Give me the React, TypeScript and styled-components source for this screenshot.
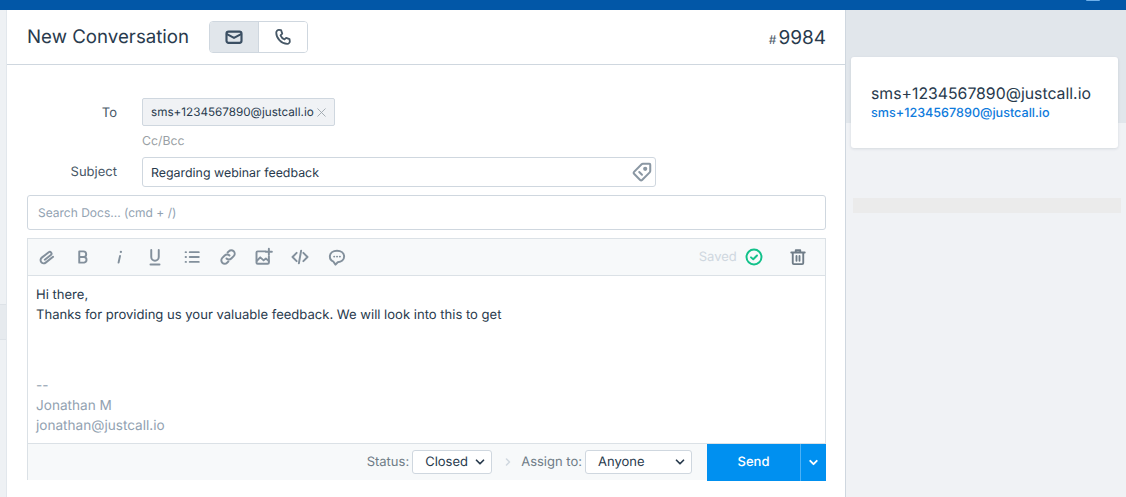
import React from "react";
import styled, { createGlobalStyle } from "styled-components";
import { ChevronDown, ChevronRight, X } from "lucide-react";

const GlobalStyle = createGlobalStyle`
  html, body {
    margin: 0;
    padding: 0;
    height: 100%;
    overflow: hidden;
    font-family: Inter, "Liberation Sans", sans-serif;
    color: #283a4d;
    text-rendering: geometricPrecision;
  }
  * { box-sizing: border-box; }
`;

const Page = styled.div`
  width: 1126px;
  height: 497px;
  display: flex;
  flex-direction: column;
  background: #f0f2f5;
  overflow: hidden;
`;

const TopBar = styled.div`
  height: 10px;
  flex: none;
  background: #0257a7;
  display: flex;
  justify-content: flex-end;
  padding-right: 26px;
`;

const Avatar = styled.div`
  width: 14px;
  height: 1px;
  background: #6fb0ea;
  border-radius: 0 0 7px 7px;
`;

const Body = styled.div`
  flex: 1;
  display: flex;
  min-height: 0;
`;

const LeftStrip = styled.div`
  width: 7px;
  flex: none;
  padding-top: 294px;
  background: #eef1f4;
  border-right: 1px solid #e2e7ec;
`;

const StripBand = styled.div`
  height: 36px;
  background: #e6eaee;
  border-top: 1px solid #dde2e7;
  border-bottom: 1px solid #dde2e7;
`;

const Main = styled.main`
  width: 839px;
  flex: none;
  background: #fff;
  border-right: 1px solid #cfd7df;
  display: flex;
  flex-direction: column;
`;

const Header = styled.header`
  height: 55px;
  flex: none;
  border-bottom: 1px solid #cfd7df;
  padding: 11px 19px 0 20px;
  display: flex;
  align-items: flex-start;
`;

const Title = styled.h1`
  margin: 0 20px 0 0;
  font-size: 18.7px;
  font-weight: 400;
  line-height: 31px;
  color: #283a4d;
`;

const ModeGroup = styled.div`
  display: flex;
  height: 32px;
  border: 1px solid #cfd7df;
  border-radius: 4px;
  overflow: hidden;
`;

const ModeButton = styled.div<{ $active?: boolean }>`
  width: ${(p) => (p.$active ? 48 : 49)}px;
  display: flex;
  align-items: center;
  justify-content: center;
  background: ${(p) => (p.$active ? "#e1e6eb" : "#fff")};
  & + & {
    border-left: 1px solid #cfd7df;
  }
`;

const Ticket = styled.div`
  margin-left: auto;
  line-height: 33px;
  font-size: 19px;
  color: #283a4d;
  display: flex;
  align-items: baseline;
`;

const Hash = styled.span`
  font-size: 12px;
  color: #475867;
  margin-right: 2px;
`;

const Form = styled.div`
  flex: 1;
  padding: 33px 19px 0 20px;
  display: flex;
  flex-direction: column;
`;

const FieldRow = styled.div`
  display: grid;
  grid-template-columns: 90px 1fr;
  column-gap: 25px;
  align-items: center;
`;

const FieldLabel = styled.label<{ $low?: boolean }>`
  font-size: 13px;
  line-height: 18px;
  padding-top: ${(p) => (p.$low ? 2 : 0)}px;
  color: #475867;
  text-align: right;
`;

const Chip = styled.div`
  justify-self: start;
  height: 28px;
  padding: 0 5px 0 8px;
  display: flex;
  align-items: center;
  background: #f0f2f5;
  border: 1px solid #cfd7df;
  border-radius: 2px;
  font-size: 11.7px;
  color: #283a4d;
`;

const CcBcc = styled.div`
  margin: 7px 0 8px 115px;
  font-size: 12.3px;
  line-height: 16px;
  color: #9a9fa5;
`;

const SubjectBox = styled.div`
  width: 514px;
  height: 30px;
  padding: 0 2px 0 8px;
  display: flex;
  align-items: center;
  justify-content: space-between;
  border: 1px solid #cfd7df;
  border-radius: 3px;
  font-size: 12.4px;
  color: #283a4d;
`;

const SearchBox = styled.div`
  height: 35px;
  margin-top: 8px;
  padding: 0 10px;
  display: flex;
  align-items: center;
  border: 1px solid #cfd7df;
  border-radius: 3px;
  font-size: 12px;
  color: #92a2b1;
`;

const Editor = styled.section`
  margin-top: 8px;
  height: 242px;
  display: flex;
  flex-direction: column;
  border: 1px solid #dbe1e6;
`;

const Toolbar = styled.div`
  height: 37px;
  flex: none;
  background: #f7f9fa;
  border-bottom: 1px solid #dbe1e6;
  display: flex;
  align-items: center;
  padding: 0 18px 0 9.5px;
  gap: 18.25px;
`;

const ToolIcon = styled.span`
  width: 18px;
  height: 18px;
  flex: none;
  display: flex;
  align-items: center;
  justify-content: center;
  color: #83909c;
`;

const SavedGroup = styled.div`
  margin-left: auto;
  display: flex;
  align-items: center;
  gap: 8px;
  font-size: 13px;
  color: #cfd7df;
`;

const TrashWrap = styled.span`
  display: flex;
  margin-left: 8px;
  color: #6f7c87;
`;

const Content = styled.div`
  flex: 1;
  padding: 9px 8px 0;
  font-size: 13.05px;
  line-height: 20px;
  color: #283a4d;
`;

const Line = styled.div``;

const Spacer = styled.div`
  height: 51px;
`;

const Signature = styled.div`
  color: #92a2b1;
  font-size: 13.6px;
`;

const Footer = styled.div`
  height: 37px;
  flex: none;
  background: #f7f9fa;
  border-top: 1px solid #dbe1e6;
  display: flex;
  align-items: center;
  justify-content: flex-end;
  font-size: 13px;
  color: #6f7c87;
  margin: -1px -1px -1px 0;
`;

const SelectLabel = styled.span`
  margin-right: 3px;
`;

const FakeSelect = styled.div<{ $width: number }>`
  width: ${(p) => p.$width}px;
  height: 24px;
  padding: 0 4px 0 12px;
  display: flex;
  align-items: center;
  justify-content: space-between;
  background: #fff;
  border: 1px solid #cfd7df;
  border-radius: 3px;
  color: #283a4d;
`;

const Sep = styled.span`
  display: flex;
  margin: 0 7px 0 10px;
  color: #cfd7df;
`;

const SendButton = styled.div`
  width: 93px;
  height: 37px;
  margin-left: 15px;
  background: #0090f0;
  color: #fff;
  display: flex;
  align-items: center;
  justify-content: center;
  font-size: 13px;
  font-weight: 500;
`;

const SendCaret = styled.div`
  width: 26px;
  height: 37px;
  background: #0090f0;
  border-left: 1px solid #4db1f5;
  color: #fff;
  display: flex;
  align-items: center;
  justify-content: center;
`;

const Side = styled.aside`
  flex: 1;
  padding: 47px 5px 0;
  background: linear-gradient(#e1e6eb 113px, #f0f2f5 113px);
`;

const ContactCard = styled.div`
  height: 91px;
  margin-right: 3px;
  padding: 27px 20px 0;
  background: #fff;
  border-radius: 3px;
  box-shadow: 0 1px 3px rgba(24, 50, 71, 0.12);
`;

const ContactName = styled.div`
  font-size: 15.8px;
  line-height: 20px;
  font-weight: 400;
  color: #283a4d;
`;

const ContactMail = styled.div`
  font-size: 12.6px;
  line-height: 20px;
  font-weight: 500;
  color: #0f7bdc;
`;

const Placeholder = styled.div`
  height: 15px;
  margin: 50px 0 0 2px;
  background: #ebebeb;
`;

const Stroke = ({ size = 18, children }: { size?: number; children: React.ReactNode }) => (
  <svg width={size} height={size} viewBox="0 0 24 24" fill="none" stroke="currentColor" strokeWidth={2.6} strokeLinecap="round" strokeLinejoin="round">
    {children}
  </svg>
);

const tools: React.ReactNode[] = [
  <Stroke key="clip" size={20}>
    <g transform="rotate(-38 12 12)">
      <path d="M7.500 13h10.200a2.300 2.300 0 0 0 0-4.600H6a4.200 4.200 0 0 0 0 8.400h12.500" />
    </g>
  </Stroke>,
  <Stroke key="bold"><path d="M7 4.500h5.500a3.700 3.700 0 0 1 0 7.500H7zM7 12h6.500a3.800 3.800 0 0 1 0 7.500H7z" /></Stroke>,
  <Stroke key="italic"><path d="M13.400 10.500l-2 9" /><path d="M14.500 5v.3" strokeWidth={3} /></Stroke>,
  <Stroke key="underline"><path d="M7 2.500v9.500a5 5 0 0 0 10 0V2.500" /><path d="M6 22h12" /></Stroke>,
  <Stroke key="list" size={20}><path d="M9 5.500h12M9 12h12M9 18.500h12M3.500 5.500h.5M3.500 12h.5M3.500 18.500h.5" /></Stroke>,
  <Stroke key="link" size={20}><path d="M10 14a4.500 4.500 0 0 0 6.400 0l3.200-3.200a4.500 4.500 0 0 0-6.400-6.400L11.500 6" /><path d="M14 10a4.500 4.500 0 0 0-6.400 0l-3.200 3.200a4.500 4.500 0 0 0 6.400 6.400l1.700-1.600" /></Stroke>,
  <Stroke key="image" size={22}>
    <path d="M14 4.500H3.500A1.500 1.500 0 0 0 2 6v13.500A1.500 1.500 0 0 0 3.500 21h13.500a1.500 1.500 0 0 0 1.500-1.500V11" />
    <path d="M2.500 17l4.500-4.500 4.500 4 3-2.500 4 3.500" />
    <path d="M18.500 1v8M14.500 5h8" />
  </Stroke>,
  <Stroke key="code" size={22}><path d="M7.500 6.500L2 12l5.500 5.500M16.500 6.500L22 12l-5.500 5.500M13.500 3.500l-3 17" /></Stroke>,
  <Stroke key="comment" size={21}>
    <path d="M12 3c5.200 0 9.500 3 9.500 7.700 0 4.400-3.800 7.300-8.500 7.600L10 21.500l-2.700-3.900C4.500 16.500 2.500 14 2.500 10.700 2.500 6 6.800 3 12 3z" />
    <path d="M8.200 10.800h.1M12 10.800h.1M15.800 10.800h.1" />
  </Stroke>,
];

export default function App() {
  return (
    <Page>
      <GlobalStyle />
      <TopBar>
        <Avatar />
      </TopBar>
      <Body>
        <LeftStrip>
          <StripBand />
        </LeftStrip>
        <Main>
          <Header>
            <Title>New Conversation</Title>
            <ModeGroup>
              <ModeButton $active>
                <svg width="20" height="20" viewBox="0 0 24 24" fill="none" stroke="#3b4f63" strokeWidth={2.600} strokeLinejoin="round" strokeLinecap="round">
                  <rect x="3" y="5.500" width="18" height="13.500" rx="2.500" />
                  <path d="M3.500 8.500l8.500 4.500 8.500-4.500" />
                </svg>
              </ModeButton>
              <ModeButton>
                <svg width="18" height="18" viewBox="0 0 24 24" fill="none" stroke="#475867" strokeWidth={2.400} strokeLinejoin="round" strokeLinecap="round">
                  <path d="M6.500 2.500l3 .4 1.500 4.600-2.300 2.300c1 2.400 2.800 4.400 5.300 5.500l2.200-2.200 4.500 1.700.4 3c.1 1.400-1.400 3.400-3.400 3.400C10 21 3 13.500 3 6.200 3 4 5 2.400 6.500 2.500z" />
                </svg>
              </ModeButton>
            </ModeGroup>
            <Ticket>
              <Hash>#</Hash>9984
            </Ticket>
          </Header>
          <Form>
            <FieldRow>
              <FieldLabel $low>To</FieldLabel>
              <Chip>
                sms+1234567890@justcall.io
                <X size={15} color="#9aa3ab" strokeWidth={1.400} />
              </Chip>
            </FieldRow>
            <CcBcc>Cc/Bcc</CcBcc>
            <FieldRow>
              <FieldLabel>Subject</FieldLabel>
              <SubjectBox>
                Regarding webinar feedback
                <svg width="22" height="22" viewBox="0 0 24 24" fill="none" stroke="#8a97a3" strokeWidth={2.200} strokeLinejoin="round" strokeLinecap="round">
                  <path d="M13 3h7a1 1 0 0 1 1 1v7a2 2 0 0 1-.6 1.400l-8.300 8.300a1.500 1.500 0 0 1-2.100 0l-6.700-6.700a1.500 1.500 0 0 1 0-2.100l8.300-8.300A2 2 0 0 1 13 3z" />
                  <circle cx="15.500" cy="8.500" r="1.200" fill="#8a97a3" />
                  <path d="M9 12l3 3" />
                </svg>
              </SubjectBox>
            </FieldRow>
            <SearchBox>Search Docs... (cmd + /)</SearchBox>
            <Editor>
              <Toolbar>
                {tools.map((icon, i) => (
                  <ToolIcon key={i}>{icon}</ToolIcon>
                ))}
                <SavedGroup>
                  Saved
                  <svg width="18" height="18" viewBox="0 0 24 24" fill="none" stroke="#12c18a" strokeWidth={2.600} strokeLinecap="round" strokeLinejoin="round">
                    <circle cx="12" cy="12" r="10" />
                    <path d="M8 12.500l3 2.500 5-5" />
                  </svg>
                </SavedGroup>
                <TrashWrap>
                  <svg width="18" height="18" viewBox="0 0 24 24" fill="none" stroke="currentColor" strokeWidth={2.500} strokeLinecap="round" strokeLinejoin="round">
                    <path d="M3 6h18M9 6V3h6v3M5 6v14a1.500 1.500 0 0 0 1.500 1.500h11A1.500 1.500 0 0 0 19 20V6M10 10.500v6.500M14 10.500v6.500" />
                  </svg>
                </TrashWrap>
              </Toolbar>
              <Content>
                <Line>Hi there,</Line>
                <Line>Thanks for providing us your valuable feedback. We will look into this to get</Line>
                <Spacer />
                <Signature>
                  <Line>--</Line>
                  <Line>Jonathan M</Line>
                  <Line>jonathan@justcall.io</Line>
                </Signature>
              </Content>
              <Footer>
                <SelectLabel>Status:</SelectLabel>
                <FakeSelect $width={80}>
                  Closed
                  <ChevronDown size={14} strokeWidth={3} color="#283a4d" />
                </FakeSelect>
                <Sep>
                  <ChevronRight size={12} strokeWidth={3} />
                </Sep>
                <SelectLabel>Assign to:</SelectLabel>
                <FakeSelect $width={107}>
                  Anyone
                  <ChevronDown size={14} strokeWidth={3} color="#283a4d" />
                </FakeSelect>
                <SendButton>Send</SendButton>
                <SendCaret>
                  <ChevronDown size={13} strokeWidth={3.500} />
                </SendCaret>
              </Footer>
            </Editor>
          </Form>
        </Main>
        <Side>
          <ContactCard>
            <ContactName>sms+1234567890@justcall.io</ContactName>
            <ContactMail>sms+1234567890@justcall.io</ContactMail>
          </ContactCard>
          <Placeholder />
        </Side>
      </Body>
    </Page>
  );
}
